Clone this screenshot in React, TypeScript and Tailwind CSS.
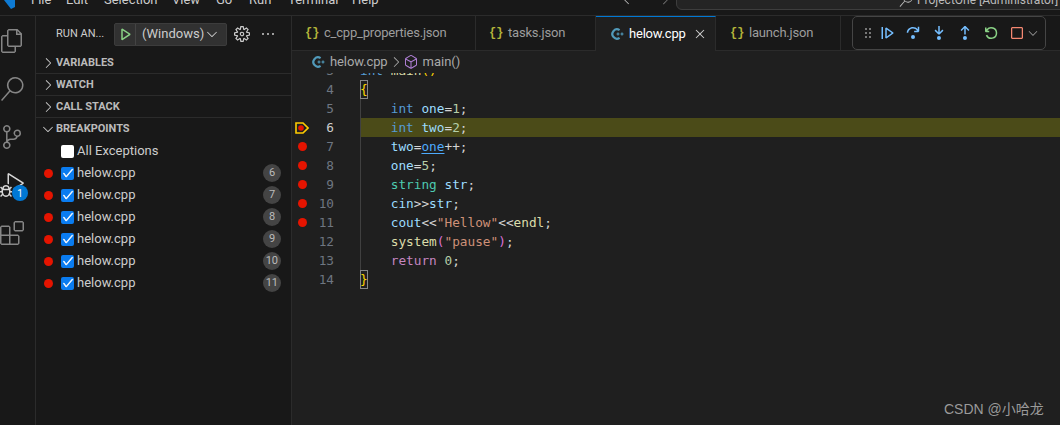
import React from 'react'
import {
  VscFiles, VscSearch, VscSourceControl, VscDebugAlt, VscExtensions, VscChevronRight, VscChevronDown,
  VscDebugStart, VscSettingsGear, VscEllipsis, VscClose, VscSymbolMethod, VscGripper, VscDebugContinue,
  VscDebugStepOver, VscDebugStepInto, VscDebugStepOut, VscDebugRestart, VscDebugStop, VscCheck,
} from 'react-icons/vsc'

const menus = [
  ['File', 'w-[35px]'],
  ['Edit', 'w-[38px]'],
  ['Selection', 'w-[68px]'],
  ['View', 'w-[44px]'],
  ['Go', 'w-[33px]'],
  ['Run', 'w-[39px]'],
  ['Terminal', 'w-[64px]'],
  ['Help', 'w-[40px]'],
]

const kw = 'text-[#569cd6]'
const vr = 'text-[#9cdcfe]'
const pn = 'text-[#d4d4d4]'
const nm = 'text-[#b5cea8]'
const fn = 'text-[#dcdcaa]'
const st = 'text-[#ce9178]'

const lines: { n: number; bp?: boolean; cur?: boolean; match?: boolean; tokens: [string, string][] }[] = [
  { n: 3, tokens: [['int ', kw], ['main', fn], ['()', 'text-[#ffd700]']] },
  { n: 4, match: true, tokens: [['{', 'text-[#ffd700]']] },
  { n: 5, tokens: [['    ', pn], ['int ', kw], ['one', vr], ['=', pn], ['1', nm], [';', pn]] },
  { n: 6, cur: true, tokens: [['    ', pn], ['int ', kw], ['two', vr], ['=', pn], ['2', nm], [';', pn]] },
  { n: 7, bp: true, tokens: [['    ', pn], ['two', vr], ['=', pn], ['one', 'text-[#4daafc] underline underline-offset-2'], ['++;', pn]] },
  { n: 8, bp: true, tokens: [['    ', pn], ['one', vr], ['=', pn], ['5', nm], [';', pn]] },
  { n: 9, bp: true, tokens: [['    ', pn], ['string ', 'text-[#4ec9b0]'], ['str', vr], [';', pn]] },
  { n: 10, bp: true, tokens: [['    ', pn], ['cin', vr], ['>>', pn], ['str', vr], [';', pn]] },
  { n: 11, bp: true, tokens: [['    ', pn], ['cout', vr], ['<<', pn], ['"Hellow"', st], ['<<', pn], ['endl', fn], [';', pn]] },
  { n: 12, tokens: [['    ', pn], ['system', fn], ['(', 'text-[#da70d6]'], ['"pause"', st], [')', 'text-[#da70d6]'], [';', pn]] },
  { n: 13, tokens: [['    ', pn], ['return ', 'text-[#c586c0]'], ['0', nm], [';', pn]] },
  { n: 14, match: true, tokens: [['}', 'text-[#ffd700]']] },
]

function CppIcon() {
  return (
    <svg width="14" height="14" viewBox="0 0 14 14" fill="none" className="shrink-0">
      <path d="M9.6 3.2A4.6 4.6 0 1 0 9.6 10.8" stroke="#519aba" strokeWidth="2.2" />
      <path d="M6.5 7h3M8 5.5v3M10.5 7h3M12 5.5v3" stroke="#519aba" strokeWidth="1.2" />
    </svg>
  )
}

function Section({ title, open }: { title: string; open?: boolean }) {
  return (
    <div className={`flex h-[22px] items-center ${open ? '' : 'border-b border-[#2b2b2b]'}`}>
      <div className="flex w-[20px] shrink-0 justify-end text-[#cccccc]">
        {open ? <VscChevronDown size={16} /> : <VscChevronRight size={16} />}
      </div>
      <span className="pt-[1px] text-[11px] font-bold text-[#bbbbbb]">{title}</span>
    </div>
  )
}

function Breakpoint({ line }: { line: number }) {
  return (
    <div className="flex h-[22px] items-center">
      <span className="ml-[8px] h-[9px] w-[9px] rounded-full bg-[#e51400]" />
      <span className="ml-[8px] flex h-[13px] w-[13px] items-center justify-center rounded-[2px] bg-[#0a7cf0] text-white">
        <VscCheck size={12} strokeWidth={1} />
      </span>
      <span className="ml-[3px] text-[13px] text-[#cccccc]">helow.cpp</span>
      <span className="mr-[10px] ml-auto flex h-[18px] min-w-[18px] items-center justify-center rounded-full bg-[#444444] px-[3px] text-[11px] text-[#bbbbbb]">
        {line}
      </span>
    </div>
  )
}

function Tab({ label, active, className }: { label: string; active?: boolean; className: string }) {
  return (
    <div className={`flex h-full items-center border-r border-[#2b2b2b] ${active ? 'border-t border-t-[#0078d4] bg-[#1f1f1f] text-white' : 'border-b border-b-[#2b2b2b] text-[#9d9d9d]'} ${className}`}>
      {active ? <CppIcon /> : <span className="w-[12px] shrink-0 font-['Liberation_Mono',monospace] text-[12px] leading-none font-bold whitespace-pre text-[#b4b43a]">{'{}'}</span>}
      <span className={`text-[13px] tracking-[-0.2px] ${active ? 'ml-[5px]' : 'ml-[7px]'}`}>{label}</span>
      {active && <VscClose size={16} className="ml-[6px] text-[#cccccc]" />}
    </div>
  )
}

export default function App() {
  return (
    <div className="relative flex h-screen w-screen flex-col overflow-hidden bg-[#1f1f1f] font-['Roboto','Liberation_Sans',sans-serif]">
      {/* Title bar, cut off by the crop */}
      <div className="h-[16px] shrink-0 overflow-hidden border-b border-[#2b2b2b] bg-[#181818]">
        <div className="-mt-[10px] flex h-[20px] items-center">
          <svg width="15" height="20" viewBox="0 0 15 20" className="ml-[1px] shrink-0">
            <path d="M10 0 3 8 .5 6 0 7l3 3 7 9 4-2V1z" fill="#0e7ad3" />
          </svg>
          <div className="ml-[15px] flex text-[13px] text-[#cccccc]">
            {menus.map(([m, w]) => (
              <span key={m} className={w}>{m}</span>
            ))}
          </div>
          <VscChevronRight size={14} className="ml-[228px] shrink-0 rotate-180 text-[#cccccc]" />
          <VscChevronRight size={14} className="ml-[24px] shrink-0 text-[#777777]" />
          <div className="ml-[4px] flex h-[20px] w-[420px] shrink-0 items-center rounded-md border border-[#3d3d3d] bg-[#242424] pl-[222px] text-[12px] text-[#bbbbbb]">
            <VscSearch size={14} className="mr-[4px]" />
            ProjectOne [Administrator]
          </div>
        </div>
      </div>

      <div className="flex min-h-0 flex-1">
        {/* Activity bar */}
        <div className="flex w-[36px] shrink-0 flex-col border-r border-[#2b2b2b] bg-[#181818] text-[#868686]">
          <div className="mt-[1px] flex h-[48px] w-[24px] items-center justify-center"><VscFiles size={24} /></div>
          <div className="flex h-[48px] w-[24px] items-center justify-center"><VscSearch size={24} /></div>
          <div className="flex h-[48px] w-[24px] items-center justify-center"><VscSourceControl size={24} /></div>
          <div className="relative flex h-[48px] w-[24px] items-center justify-center text-[#d7d7d7]">
            <VscDebugAlt size={24} />
            <span className="absolute top-[24px] left-[12px] flex h-[16px] w-[16px] items-center justify-center rounded-full bg-[#0078d4] text-[10px] text-white">1</span>
          </div>
          <div className="flex h-[48px] w-[24px] items-center justify-center"><VscExtensions size={24} /></div>
        </div>

        {/* Debug side bar */}
        <div className="flex w-[256px] shrink-0 flex-col border-r border-[#2b2b2b] bg-[#181818]">
          <div className="flex h-[36px] shrink-0 items-center">
            <span className="ml-[20px] w-[58px] text-[11px] text-[#cccccc]">RUN AN...</span>
            <div className="flex h-[23px] w-[113px] items-center rounded-[2px] border border-[#3c3c3c] bg-[#313131]">
              <div className="flex h-full w-[21px] items-center justify-center border-r border-[#444444] text-[#89d185]"><VscDebugStart size={16} /></div>
              <span className="ml-[6px] w-[62px] text-[13px] text-[#cccccc]">(Windows)</span>
              <VscChevronDown size={16} className="text-[#cccccc]" />
            </div>
            <VscSettingsGear size={16} className="ml-[7px] text-[#cccccc]" />
            <VscEllipsis size={16} className="ml-[10px] text-[#cccccc]" />
          </div>
          <Section title="VARIABLES" />
          <Section title="WATCH" />
          <Section title="CALL STACK" />
          <Section title="BREAKPOINTS" open />
          <div className="flex h-[22px] items-center">
            <span className="ml-[25px] h-[13px] w-[13px] rounded-[2px] bg-white" />
            <span className="ml-[3px] text-[13px] text-[#cccccc]">All Exceptions</span>
          </div>
          {[6, 7, 8, 9, 10, 11].map((n) => (
            <Breakpoint key={n} line={n} />
          ))}
        </div>

        {/* Editor */}
        <div className="flex min-w-0 flex-1 flex-col">
          <div className="flex h-[35px] shrink-0 bg-[#181818]">
            <Tab label="c_cpp_properties.json" className="w-[184px] pl-[13px]" />
            <Tab label="tasks.json" className="w-[120px] pl-[13px]" />
            <Tab label="helow.cpp" active className="w-[120px] pl-[14px]" />
            <Tab label="launch.json" className="w-[125px] pl-[14px]" />
            <div className="flex-1 border-b border-[#2b2b2b]" />
          </div>
          <div className="relative z-10 flex h-[22px] shrink-0 items-center bg-[#1f1f1f] pl-[19px] text-[13px] text-[#a9a9a9]">
            <CppIcon />
            <span className="ml-[5px] tracking-[-0.1px]">helow.cpp</span>
            <VscChevronRight size={16} />
            <VscSymbolMethod size={16} className="-ml-[1px] text-[#b180d7]" />
            <span className="ml-[4px]">main()</span>
          </div>
          <div className="-mt-[12px] font-['DejaVu_Sans_Mono',monospace] text-[12.75px] leading-[19px]">
            {lines.map((l) => (
              <div key={l.n} className="flex h-[19px]">
                <div className="flex w-[68px] shrink-0 items-center">
                  <div className="flex w-[20px] justify-center">
                    {l.bp && <span className="h-[9px] w-[9px] rounded-full bg-[#e51400]" />}
                    {l.cur && (
                      <svg width="14" height="12" viewBox="0 0 14 12">
                        <path d="M1 1h7l5 5-5 5H1z" fill="none" stroke="#ffcc00" strokeWidth="1.6" />
                        <circle cx="6" cy="6" r="2.8" fill="#e51400" />
                      </svg>
                    )}
                  </div>
                  <span className={`w-[22px] text-right ${l.cur ? 'text-[#cccccc]' : 'text-[#6e7681]'}`}>{l.n}</span>
                </div>
                <div className={`flex-1 whitespace-pre ${l.cur ? 'bg-[#4b4b18]' : ''} ${l.n > 4 && l.n < 14 ? 'border-l border-[#404040]' : ''}`}>
                  <span className={`${l.n > 4 && l.n < 14 ? '-ml-px' : ''} ${l.match ? 'outline outline-[#888888] -outline-offset-1' : ''} inline-block`}>
                    {l.tokens.map(([t, c], i) => (
                      <span key={i} className={c}>{t}</span>
                    ))}
                  </span>
                </div>
              </div>
            ))}
          </div>
        </div>
      </div>

      {/* Floating debug toolbar */}
      <div className="absolute top-[16px] left-[852px] flex h-[34px] w-[194px] items-center rounded-[5px] border border-[#454545] bg-[#181818] pl-[7px]">
        <VscGripper size={16} className="text-[#777777]" />
        <VscDebugContinue size={16} className="ml-[3px] text-[#75beff]" />
        <VscDebugStepOver size={16} className="ml-[10px] text-[#75beff]" />
        <VscDebugStepInto size={16} className="ml-[10px] text-[#75beff]" />
        <VscDebugStepOut size={16} className="ml-[10px] text-[#75beff]" />
        <VscDebugRestart size={16} className="ml-[10px] text-[#89d185]" />
        <VscDebugStop size={16} className="ml-[10px] text-[#f48771]" />
        <VscChevronDown size={14} className="ml-[1px] text-[#999999]" />
      </div>

      {/* Watermark */}
      <span className="absolute top-[399px] left-[944px] font-['Liberation_Sans','Noto_Sans_CJK_SC',sans-serif] text-[14px] text-[#9a9a9a]">CSDN @小哈龙</span>
    </div>
  )
}
